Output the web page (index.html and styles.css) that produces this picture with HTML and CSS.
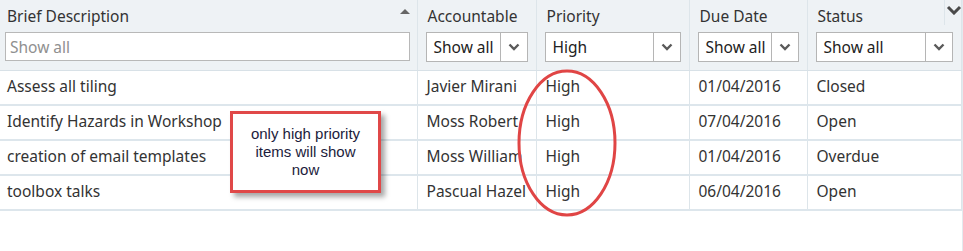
FILE: index.html
```html
<!DOCTYPE html>
<html lang="en">
<head>
  <meta charset="UTF-8">
  <title>Actions</title>
  <link rel="stylesheet" href="styles.css">
</head>
<body>
  <div class="grid">
    <table class="tbl">
      <colgroup>
        <col class="c1"><col class="c2"><col class="c3"><col class="c4"><col class="c5">
      </colgroup>
      <thead>
        <tr>
          <th>
            <div class="head-title">Brief Description <span class="sort"></span></div>
            <input class="filter-text" type="text" placeholder="Show all">
          </th>
          <th>
            <div class="head-title">Accountable</div>
            <div class="dd"><span class="dd-val">Show all</span><span class="dd-btn"><svg width="12" height="8" viewBox="0 0 12 8"><path d="M1.5 1.5 L6 6 L10.5 1.5" fill="none" stroke="#5a5a5a" stroke-width="2.4"/></svg></span></div>
          </th>
          <th>
            <div class="head-title">Priority</div>
            <div class="dd"><span class="dd-val">High</span><span class="dd-btn"><svg width="12" height="8" viewBox="0 0 12 8"><path d="M1.5 1.5 L6 6 L10.5 1.5" fill="none" stroke="#5a5a5a" stroke-width="2.4"/></svg></span></div>
          </th>
          <th>
            <div class="head-title">Due Date</div>
            <div class="dd"><span class="dd-val">Show all</span><span class="dd-btn"><svg width="12" height="8" viewBox="0 0 12 8"><path d="M1.5 1.5 L6 6 L10.5 1.5" fill="none" stroke="#5a5a5a" stroke-width="2.4"/></svg></span></div>
          </th>
          <th>
            <div class="head-title">Status</div>
            <div class="dd"><span class="dd-val">Show all</span><span class="dd-btn"><svg width="12" height="8" viewBox="0 0 12 8"><path d="M1.5 1.5 L6 6 L10.5 1.5" fill="none" stroke="#5a5a5a" stroke-width="2.4"/></svg></span></div>
          </th>
        </tr>
      </thead>
      <tbody>
        <tr><td>Assess all tiling</td><td>Javier Mirani</td><td>High</td><td>01/04/2016</td><td>Closed</td></tr>
        <tr><td>Identify Hazards in Workshop</td><td>Moss Robert</td><td>High</td><td>07/04/2016</td><td>Open</td></tr>
        <tr><td>creation of email templates</td><td>Moss William</td><td>High</td><td>01/04/2016</td><td>Overdue</td></tr>
        <tr><td>toolbox talks</td><td>Pascual Hazel</td><td>High</td><td>06/04/2016</td><td>Open</td></tr>
      </tbody>
    </table>

    <!-- menu de colonnes en haut à droite -->
    <div class="col-menu"><svg width="16" height="10" viewBox="0 0 16 10"><path d="M2 2 L8 8 L14 2" fill="none" stroke="#4a4a4a" stroke-width="3"/></svg></div>

    <!-- annotations -->
    <div class="note">only high priority items will show now</div>
    <svg class="circle" width="104" height="150" viewBox="0 0 104 150">
      <ellipse cx="52" cy="75" rx="48" ry="72" fill="none" stroke="#e04545" stroke-width="3"/>
    </svg>
  </div>
</body>
</html>
```

FILE: styles.css
```css
body {
  margin: 0;
  background: #fff;
  font-family: "Noto Sans", "Open Sans", sans-serif;
  color: #333;
}
.grid {
  position: relative;
  width: 963px;
  height: 251px;
  border-right: 1px solid #e3eaee;
  box-sizing: border-box;
}
.tbl {
  border-collapse: collapse;
  table-layout: fixed;
  width: 961px;
}
.c1 { width: 417px; }
.c2 { width: 119px; }
.c3 { width: 153px; }
.c4 { width: 118px; }
.c5 { width: 154px; }

thead th {
  background: #eef2f5;
  height: 70px;
  padding: 0 8px;
  text-align: left;
  font-weight: normal;
  vertical-align: top;
  border-right: 1px solid #dde5ea;
  border-bottom: 1px solid #d8e1e7;
  box-sizing: border-box;
}
thead th:first-child {
  padding: 0 7px 0 5px;
}
.head-title {
  position: relative;
  font-size: 15.5px;
  color: #333;
  height: 32px;
  line-height: 32px;
  padding-left: 2px;
}
.sort {
  position: absolute;
  right: 0;
  top: 9px;
  width: 0;
  height: 0;
  border-left: 5px solid transparent;
  border-right: 5px solid transparent;
  border-bottom: 5px solid #666;
}
.filter-text {
  display: block;
  width: 100%;
  height: 29px;
  margin: 0;
  padding: 0 4px;
  border: 1px solid #b8b8b8;
  box-sizing: border-box;
  font-family: inherit;
  font-size: 15.5px;
  color: #333;
}
.filter-text::placeholder {
  color: #909090;
}
.dd {
  display: flex;
  height: 30px;
  border: 1px solid #b5b5b5;
  background: #fff;
  box-sizing: border-box;
}
.dd-val {
  flex: 1;
  padding-left: 7px;
  font-size: 15.5px;
  line-height: 28px;
  color: #222;
  white-space: nowrap;
  overflow: hidden;
}
.dd-btn {
  width: 26px;
  border-left: 1px solid #b5b5b5;
  display: flex;
  align-items: center;
  justify-content: center;
}

tbody td {
  height: 35px;
  padding: 0 7px 3px;
  font-size: 15.5px;
  color: #333;
  border-right: 1px solid #dde5ea;
  border-bottom: 2px solid #dde6ec;
  box-sizing: border-box;
  white-space: nowrap;
  overflow: hidden;
}
tbody td:nth-child(2),
tbody td:nth-child(3),
tbody td:nth-child(4),
tbody td:nth-child(5) {
  padding-left: 9px;
}

.col-menu {
  position: absolute;
  top: 0;
  right: 0;
  width: 18px;
  height: 25px;
  border-left: 1px solid #dde5ea;
  display: flex;
  justify-content: center;
  padding-top: 5px;
  box-sizing: border-box;
}

.note {
  position: absolute;
  left: 230px;
  top: 111px;
  width: 151px;
  height: 82px;
  box-sizing: border-box;
  border: 3px solid #e04848;
  background: #fff;
  box-shadow: 4px 4px 5px rgba(0, 0, 0, 0.35);
  padding: 11px 12px 0;
  text-align: center;
  font-family: "Liberation Sans", Arial, sans-serif;
  font-size: 15px;
  line-height: 18px;
  color: #1c1c3c;
}
.circle {
  position: absolute;
  left: 515px;
  top: 68px;
}
```
